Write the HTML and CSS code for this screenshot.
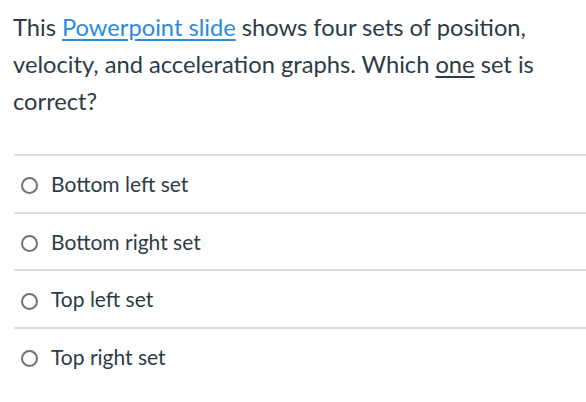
FILE: index.html
```html
<!DOCTYPE html>
<html>
<head>
<meta charset="utf-8">
<link rel="stylesheet" href="styles.css">
</head>
<body>
<div class="question">
  <p class="prompt">This <a href="#" class="link">Powerpoint slide</a> shows four sets of position, velocity, and acceleration graphs. Which <u class="em">one</u> set is correct?</p>
  <div class="answers">
    <label class="answer"><span class="radio"></span><span class="label">Bottom left set</span></label>
    <label class="answer"><span class="radio"></span><span class="label">Bottom right set</span></label>
    <label class="answer"><span class="radio"></span><span class="label">Top left set</span></label>
    <label class="answer"><span class="radio"></span><span class="label">Top right set</span></label>
  </div>
</div>
</body>
</html>
```

FILE: styles.css
```css
html, body {
  margin: 0;
  padding: 0;
  background: #ffffff;
}
body {
  font-family: Lato, "Liberation Sans", sans-serif;
  color: #2d3b45;
  width: 586px;
  overflow: hidden;
}
.question {
  padding-left: 14px;
}
.prompt {
  margin: 0;
  padding-top: 9px;
  font-size: 23.7px;
  line-height: 37px;
  width: 565px;
  margin-left: -1px;
}
.link {
  color: #2a8be0;
  text-decoration: underline;
  text-underline-offset: 3px;
}
.em {
  text-underline-offset: 3px;
}
.answers {
  margin-top: 34px;
}
.answer {
  display: flex;
  align-items: center;
  height: 55.7px;
  border-top: 2px solid #dddddd;
  font-size: 21px;
}
.radio {
  width: 13px;
  height: 13px;
  border: 2px solid #727272;
  border-radius: 50%;
  margin-left: 7px;
  margin-right: 13px;
  flex: none;
  position: relative;
  top: 2px;
}
.label {
  line-height: 24px;
}
```
